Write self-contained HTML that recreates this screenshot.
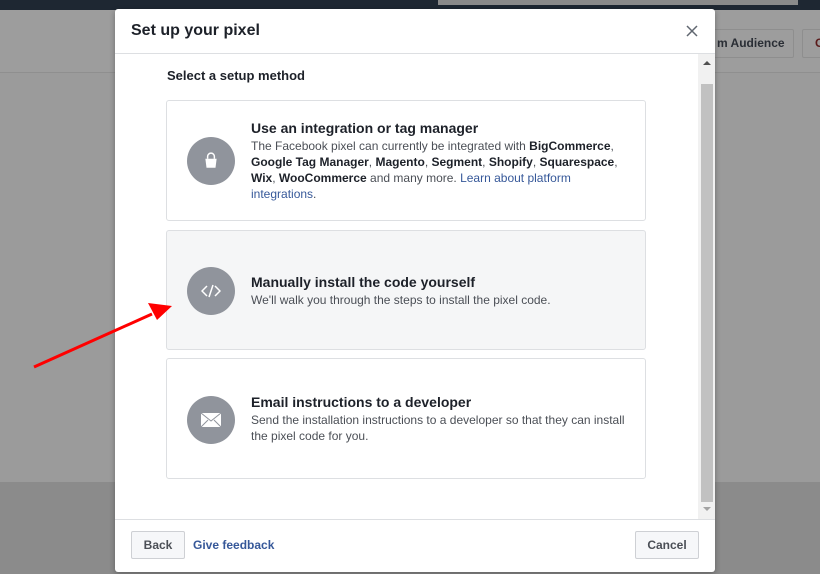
<!DOCTYPE html>
<html><head><style>
*{box-sizing:border-box;margin:0;padding:0}
body{width:820px;height:574px;position:relative;overflow:hidden;background:#9b9b9b;font-family:"Liberation Sans",Arial,sans-serif;color:#1d2129}
.abs{position:absolute}
.card{position:absolute;left:166px;width:480px;border:1px solid #dddfe2;border-radius:3px;background:#fff}
.ic{position:absolute;left:20px;width:48px;height:48px;border-radius:50%;background:#90949c;display:flex;align-items:center;justify-content:center}
.tx{position:absolute;left:84px;width:380px;font-size:12px;line-height:16px;color:#4b4f56}
.tx h3{font-size:14px;font-weight:bold;color:#1d2129;line-height:18px;margin-bottom:1px}
.tx b{color:#1d2129}
a{color:#365899;text-decoration:none}
.btn{position:absolute;height:28px;border:1px solid #ced0d4;border-radius:2px;background:#f6f7f9;font-size:12px;font-weight:bold;color:#4b4f56;line-height:26px;text-align:center}
</style></head><body>
<div class="abs" style="left:0;top:0;width:820px;height:10px;background:#1e2732"></div>
<div class="abs" style="left:438px;top:0;width:360px;height:5px;background:#8a8a8a"></div>
<div class="abs" style="left:0;top:10px;width:820px;height:63px;background:#9d9d9d;border-bottom:1px solid #8f8f8f"></div>
<div class="abs" style="left:0;top:482px;width:820px;height:92px;background:#8b8b8b"></div>
<div class="abs" style="left:690px;top:29px;width:104px;height:29px;border:1px solid #8e8e8e;border-radius:2px;font-size:12px;font-weight:bold;color:#2a2e35;line-height:27px;padding-left:26px">m Audience</div>
<div class="abs" style="left:802px;top:29px;width:30px;height:29px;border:1px solid #8e8e8e;border-radius:2px;font-size:12px;font-weight:bold;color:#5a1a1a;line-height:27px;padding-left:12px">C</div>

<div class="abs" style="left:115px;top:9px;width:600px;height:563px;background:#fff;border-radius:3px;box-shadow:0 2px 6px rgba(0,0,0,.3)">
  <div class="abs" style="left:16px;top:13px;font-size:16px;font-weight:bold;color:#1d2129">Set up your pixel</div>
  <svg class="abs" style="left:571px;top:16px" width="12" height="12" viewBox="0 0 12 12"><path d="M1 1L11 11M11 1L1 11" stroke="#606770" stroke-width="1.5"/></svg>
  <div class="abs" style="left:0;top:44px;width:600px;height:1px;background:#dddfe2"></div>
  <div class="abs" style="left:583px;top:45px;width:17px;height:465px;background:#f1f1f1"></div>
  <div class="abs" style="left:586px;top:75px;width:12px;height:418px;background:#c1c1c1"></div>
  <div class="abs" style="left:588px;top:52px;width:0;height:0;border-left:4px solid transparent;border-right:4px solid transparent;border-bottom:4px solid #505050"></div>
  <div class="abs" style="left:588px;top:498px;width:0;height:0;border-left:4px solid transparent;border-right:4px solid transparent;border-top:4px solid #a3a3a3"></div>
  <div class="abs" style="left:52px;top:59px;font-size:13px;font-weight:bold;color:#1d2129">Select a setup method</div>
  <div class="abs" style="left:0;top:510px;width:600px;height:1px;background:#dddfe2"></div>
  <div class="btn" style="left:16px;top:522px;width:54px">Back</div>
  <div class="abs" style="left:78px;top:529px;font-size:12px;font-weight:bold;color:#365899">Give feedback</div>
  <div class="btn" style="left:520px;top:522px;width:64px">Cancel</div>
</div>

<div class="card" style="top:100px;height:121px">
  <div class="ic" style="top:36px"><svg width="18" height="18" viewBox="0 0 16 16"><path d="M5 6V4a3 3 0 0 1 6 0v2" stroke="#fff" stroke-width="1.3" fill="none"/><path d="M3 6h10l-1 8H4z" fill="#fff"/></svg></div>
  <div class="tx" style="top:18px"><h3>Use an integration or tag manager</h3>The Facebook pixel can currently be integrated with <b>BigCommerce</b>, <b>Google Tag Manager</b>, <b>Magento</b>, <b>Segment</b>, <b>Shopify</b>, <b>Squarespace</b>, <b>Wix</b>, <b>WooCommerce</b> and many more. <a>Learn about platform integrations</a>.</div>
</div>
<div class="card" style="top:230px;height:120px;background:#f5f6f7">
  <div class="ic" style="top:36px"><svg width="20" height="14" viewBox="0 0 20 14"><path d="M6 2L1 7l5 5M14 2l5 5-5 5M12 1L8 13" stroke="#fff" stroke-width="1.5" fill="none"/></svg></div>
  <div class="tx" style="top:42px"><h3>Manually install the code yourself</h3>We'll walk you through the steps to install the pixel code.</div>
</div>
<div class="card" style="top:358px;height:121px">
  <div class="ic" style="top:37px"><svg width="20" height="14" viewBox="0 0 20 14"><rect x="0" y="0" width="20" height="14" fill="#fff"/><path d="M0 0l10 8 10-8M0 14l7-7M20 14l-7-7" stroke="#90949c" stroke-width="1" fill="none"/></svg></div>
  <div class="tx" style="top:34px"><h3>Email instructions to a developer</h3>Send the installation instructions to a developer so that they can install the pixel code for you.</div>
</div>

<svg class="abs" style="left:0;top:0" width="820" height="574"><line x1="34" y1="367" x2="152" y2="314" stroke="#f00" stroke-width="3"/><polygon points="172,306 148,303 157,320" fill="#f00"/></svg>
</body></html>
